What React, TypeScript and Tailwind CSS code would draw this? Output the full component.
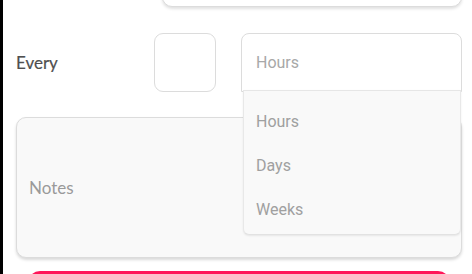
export default function App() {
  const units = ["Hours", "Days", "Weeks"];
  return (
    <div className="relative w-[472px] h-[274px] overflow-hidden bg-white border-l-[3px] border-black pl-[13px] pr-[10px] flex flex-col">
      {/* previous field, scrolled off the top */}
      <div className="shrink-0 -mt-[30px] ml-[146px] h-[37px] rounded-[10px] border border-[#dcdcdc] bg-white shadow-[0_2px_3px_rgba(0,0,0,0.12)]" />

      <div className="shrink-0 mt-[26px] flex items-center h-[59px]">
        <span className="w-[138px] font-['Lato',sans-serif] text-[17px] text-[#4f4f4f] [-webkit-text-stroke:0.2px_#4f4f4f]">
          Every
        </span>
        <div className="w-[62px] h-[59px] rounded-[9px] border border-[#dcdcdc] bg-white" />
        <div className="ml-[25px] flex-1 h-[59px] flex items-center px-[14px] rounded-t-[8px] border border-[#dcdcdc] bg-white">
          <span className="font-['Roboto',sans-serif] text-[16px] text-[#a8a8a8]">Hours</span>
        </div>
      </div>

      <div className="shrink-0 mt-[25px] h-[141px] flex items-center px-[12px] rounded-[10px] border border-[#dcdcdc] bg-[#f9f9f9] shadow-[0_2px_3px_rgba(0,0,0,0.15)]">
        <span className="font-['Lato',sans-serif] text-[17px] text-[#9a9a9a]">Notes</span>
      </div>

      <div className="shrink-0 mt-[13px] mx-[12px] h-[40px] rounded-[12px] bg-[#ff1659]" />

      {/* open unit menu */}
      <div className="absolute left-[240px] top-[90px] w-[218px] h-[145px] pt-[9px] bg-[#f9f9f9] border-t border-[#e6e6e6] border-x border-b border-x-[#e8e8e8] border-b-[#e2e2e2] rounded-b-[6px] shadow-[0_1px_2px_rgba(0,0,0,0.08)]">
        {units.map((u) => (
          <div key={u} className="h-[44px] flex items-center px-[12px] font-['Roboto',sans-serif] text-[16px] text-[#a0a0a0]">
            {u}
          </div>
        ))}
      </div>
    </div>
  );
}
